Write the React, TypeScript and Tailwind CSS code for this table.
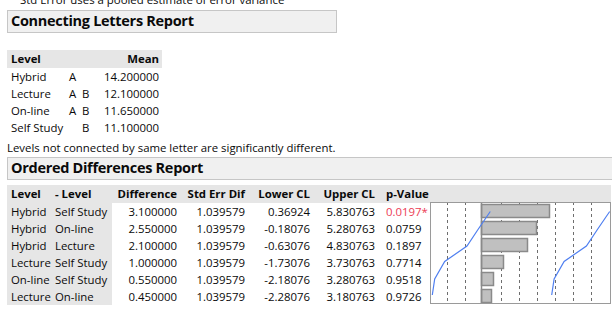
import React from "react";

const font = { fontFamily: '"Open Sans", "Noto Sans", sans-serif' };

const letters = [
  { level: "Hybrid", a: "A", b: "", mean: "14.200000" },
  { level: "Lecture", a: "A", b: "B", mean: "12.100000" },
  { level: "On-line", a: "A", b: "B", mean: "11.650000" },
  { level: "Self Study", a: "", b: "B", mean: "11.100000" },
];

const diffs = [
  { l: "Hybrid", m: "Self Study", d: "3.100000", se: "1.039579", lo: "0.36924", up: "5.830763", p: "0.0197*", sig: true, bar: 119 },
  { l: "Hybrid", m: "On-line", d: "2.550000", se: "1.039579", lo: "-0.18076", up: "5.280763", p: "0.0759", sig: false, bar: 106 },
  { l: "Hybrid", m: "Lecture", d: "2.100000", se: "1.039579", lo: "-0.63076", up: "4.830763", p: "0.1897", sig: false, bar: 97 },
  { l: "Lecture", m: "Self Study", d: "1.000000", se: "1.039579", lo: "-1.73076", up: "3.730763", p: "0.7714", sig: false, bar: 73 },
  { l: "On-line", m: "Self Study", d: "0.550000", se: "1.039579", lo: "-2.18076", up: "3.280763", p: "0.9518", sig: false, bar: 63 },
  { l: "Lecture", m: "On-line", d: "0.450000", se: "1.039579", lo: "-2.28076", up: "3.180763", p: "0.9726", sig: false, bar: 61 },
];

function Chart() {
  const dashed = [17, 35, 71, 89, 107, 125, 143, 161];
  const curve = [
    [2.3, 93],
    [4.7, 77],
    [14.7, 59.5],
    [37, 44],
    [48, 27.5],
    [60.3, 9.5],
  ];
  const left = curve.map((p) => `${p[0]},${p[1]}`).join(" ");
  const right = curve.map((p) => `${p[0] + 119.4},${p[1]}`).join(" ");
  return (
    <div className="w-[181px] h-[102px] border border-[#9a9a9a] bg-white">
      <svg width="179" height="100" viewBox="1 1 179 100" className="block">
        {dashed.map((x) => (
          <line key={x} x1={x + 0.5} y1={0} x2={x + 0.5} y2={102} stroke="#6e6e6e" strokeWidth={1} strokeDasharray="3 3" />
        ))}
        {diffs.map((r, i) => (
          <rect key={i} x={51.5} y={2.5 + i * 17} width={r.bar - 51} height={13} fill="#c0c0c0" stroke="#8a8a8a" strokeWidth={1.5} />
        ))}
        <line x1={51.5} y1={0} x2={51.5} y2={102} stroke="#8a8a8a" strokeWidth={1.5} />
        <polyline points={left} fill="none" stroke="#4f7ff0" strokeWidth={1.2} />
        <polyline points={right} fill="none" stroke="#4f7ff0" strokeWidth={1.2} />
      </svg>
    </div>
  );
}

export default function App() {
  return (
    <div className="w-[612px] h-[320px] overflow-hidden bg-white text-[#0a0a0a] text-[11.4px]" style={font}>
      <div className="h-[17px] leading-[17px] -mt-[9px] pl-[20px] whitespace-nowrap">
        Std Error uses a pooled estimate of error variance
      </div>

      <div className="mt-[2px] ml-[7px] w-[330px] h-[23px] border border-[#c6c6c6] bg-[#f0f0f0] flex items-center pl-[3px]">
        <span className="font-bold text-[14.5px] tracking-[-0.3px] leading-none">Connecting Letters Report</span>
      </div>

      <div className="mt-[17px] ml-[7px] w-[155px]">
        <div className="grid grid-cols-[59px_14px_13px_69px] h-[18px] leading-[18px] bg-[#e6e6e6] font-bold">
          <div className="pl-[4px]">Level</div>
          <div></div>
          <div></div>
          <div className="text-right pr-[3px]">Mean</div>
        </div>
        {letters.map((r) => (
          <div key={r.level} className="grid grid-cols-[59px_14px_13px_69px] h-[17px] leading-[17px]">
            <div className="pl-[4px] whitespace-nowrap">{r.level}</div>
            <div className="pl-[3px]">{r.a}</div>
            <div className="pl-[2px]">{r.b}</div>
            <div className="text-right pr-[3px]">{r.mean}</div>
          </div>
        ))}
      </div>

      <div className="mt-[3px] ml-[7px] h-[17px] leading-[17px] whitespace-nowrap">
        Levels not connected by same letter are significantly different.
      </div>

      <div className="mt-[1px] ml-[7px] w-[610px] h-[23px] border border-[#c6c6c6] bg-[#f0f0f0] flex items-center pl-[3px]">
        <span className="font-bold text-[14.5px] tracking-[-0.3px] leading-none">Ordered Differences Report</span>
      </div>

      <div className="mt-[5px] ml-[7px] w-[604px]">
        <div className="grid grid-cols-[45px_60px_68px_68px_65px_65px_52px] h-[18px] leading-[18px] bg-[#e6e6e6] font-bold whitespace-nowrap">
          <div className="pl-[4px]">Level</div>
          <div className="pl-[3px]">- Level</div>
          <div className="text-right pr-[3px]">Difference</div>
          <div className="text-right pr-[3px]">Std Err Dif</div>
          <div className="text-right pr-[3px]">Lower CL</div>
          <div className="text-right pr-[3px]">Upper CL</div>
          <div className="pl-[8px]">p-Value</div>
        </div>
        <div className="flex -mt-[1px]">
          <div className="w-[423px] pt-[1px]">
            {diffs.map((r, i) => (
              <div key={i} className="grid grid-cols-[45px_60px_68px_68px_65px_65px_52px] h-[17px] leading-[17px] whitespace-nowrap">
                <div className="pl-[4px] bg-[#e6e6e6]">{r.l}</div>
                <div className="pl-[3px] bg-[#e6e6e6]">{r.m}</div>
                <div className="text-right pr-[3px]">{r.d}</div>
                <div className="text-right pr-[3px]">{r.se}</div>
                <div className="text-right pr-[3px]">{r.lo}</div>
                <div className="text-right pr-[3px]">{r.up}</div>
                <div className={`pl-[8px] ${r.sig ? "text-[#ec3b55]" : ""}`}>{r.p}</div>
              </div>
            ))}
          </div>
          <Chart />
        </div>
      </div>
    </div>
  );
}
